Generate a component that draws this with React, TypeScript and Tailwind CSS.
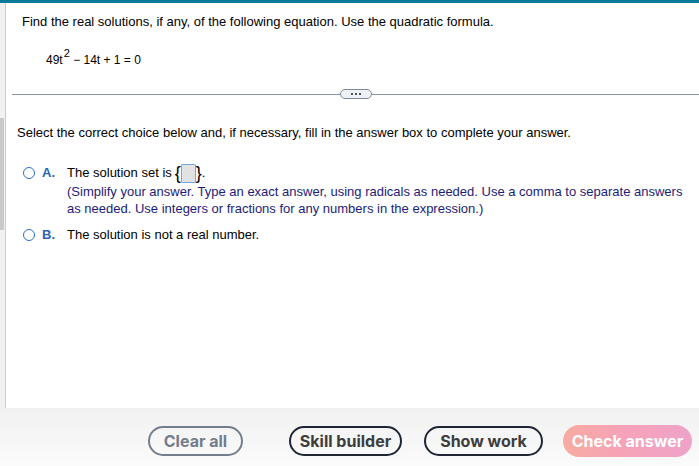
export default function App() {
  return (
    <div className="w-[699px] h-[466px] flex flex-col bg-white overflow-hidden font-['Liberation_Sans',Arial,sans-serif]">
      <div className="h-[3px] bg-[#0b7a99]" />
      <div className="flex flex-1">
        {/* left gutter with scrollbar thumb */}
        <div className="w-[5px] bg-[#f1f1f1] flex flex-col">
          <div className="h-[115px]" />
          <div className="h-[112px] w-[4px] bg-[#c9c9c9]" />
        </div>
        <div className="w-[1px] bg-[#c5ccd6]" />
        <div className="flex-1 flex flex-col">
          <p className="text-[13px] text-black mt-[11px] ml-[16px] leading-[16px]">
            Find the real solutions, if any, of the following equation. Use the quadratic formula.
          </p>
          <p className="text-[12px] text-black mt-[22px] ml-[40px] leading-[16px]">
            49t<span className="inline-block text-[11px] -translate-y-[7px] ml-[1px]">2</span> − 14t + 1 = 0
          </p>
          <div className="mt-[21px] ml-[6px] flex items-center">
            <div className="flex-1 h-[1px] bg-[#8794a1]" />
            <div className="w-[32px] h-[10px] rounded-full border border-[#7f8b97] bg-[#eef2f6] flex items-center justify-center gap-[2px]">
              <span className="w-[2px] h-[2px] bg-[#4a5563]" />
              <span className="w-[2px] h-[2px] bg-[#4a5563]" />
              <span className="w-[2px] h-[2px] bg-[#4a5563]" />
            </div>
            <div className="flex-1 h-[1px] bg-[#8794a1]" />
          </div>
          <p className="text-[13px] text-black mt-[26px] ml-[11px] leading-[16px]">
            Select the correct choice below and, if necessary, fill in the answer box to complete your answer.
          </p>
          <div className="mt-[24px] ml-[17px] flex">
            <div className="w-[12px] h-[12px] rounded-full border border-[#2e6ed0] mt-[2px]" />
            <span className="ml-[7px] text-[13px] font-bold text-[#2b63b6] leading-[16px]">A.</span>
            <div className="ml-[12px] flex flex-col">
              <div className="flex items-center text-[13px] text-black leading-[16px] h-[18px] -mt-[1px]">
                <span>The solution set is</span>
                <span className="ml-[3px] text-[18px] font-light leading-[18px]">{"{"}</span>
                <span className="w-[15px] h-[19px] bg-[#e2e2e2] border border-[#6fa8e6] rounded-[1px]" />
                <span className="text-[18px] font-light leading-[18px]">{"}"}</span>
                <span>.</span>
              </div>
              <p className="text-[13px] text-[#1c1c78] leading-[17px] mt-[1px] w-[620px]">
                (Simplify your answer. Type an exact answer, using radicals as needed. Use a comma to separate answers as needed. Use integers or fractions for any numbers in the expression.)
              </p>
            </div>
          </div>
          <div className="mt-[10px] ml-[17px] flex">
            <div className="w-[12px] h-[12px] rounded-full border border-[#2e6ed0] mt-[2px]" />
            <span className="ml-[7px] text-[13px] font-bold text-[#2b63b6] leading-[16px]">B.</span>
            <span className="ml-[12px] text-[13px] text-black leading-[16px]">The solution is not a real number.</span>
          </div>
        </div>
      </div>
      <div className="h-[58px] pt-[8px] bg-gradient-to-b from-[#f1f1f1] to-[#fbfbfb] flex items-center font-['Inter',sans-serif] text-[16px] font-bold">
        <button className="ml-[148px] w-[95px] h-[30px] rounded-full border-2 border-[#737d8c] text-[#737d8c] bg-transparent">
          Clear all
        </button>
        <button className="ml-[46px] w-[113px] h-[30px] rounded-full border-2 border-[#1e2633] text-[#3d3d3d] bg-transparent">
          Skill builder
        </button>
        <button className="ml-[22px] w-[119px] h-[30px] rounded-full border-2 border-[#1e2633] text-[#3d3d3d] bg-transparent">
          Show work
        </button>
        <button className="ml-[20px] w-[129px] h-[32px] rounded-full bg-gradient-to-r from-[#f8aba0] via-[#f6a2ba] to-[#eea3c9] text-white">
          Check answer
        </button>
      </div>
    </div>
  );
}
